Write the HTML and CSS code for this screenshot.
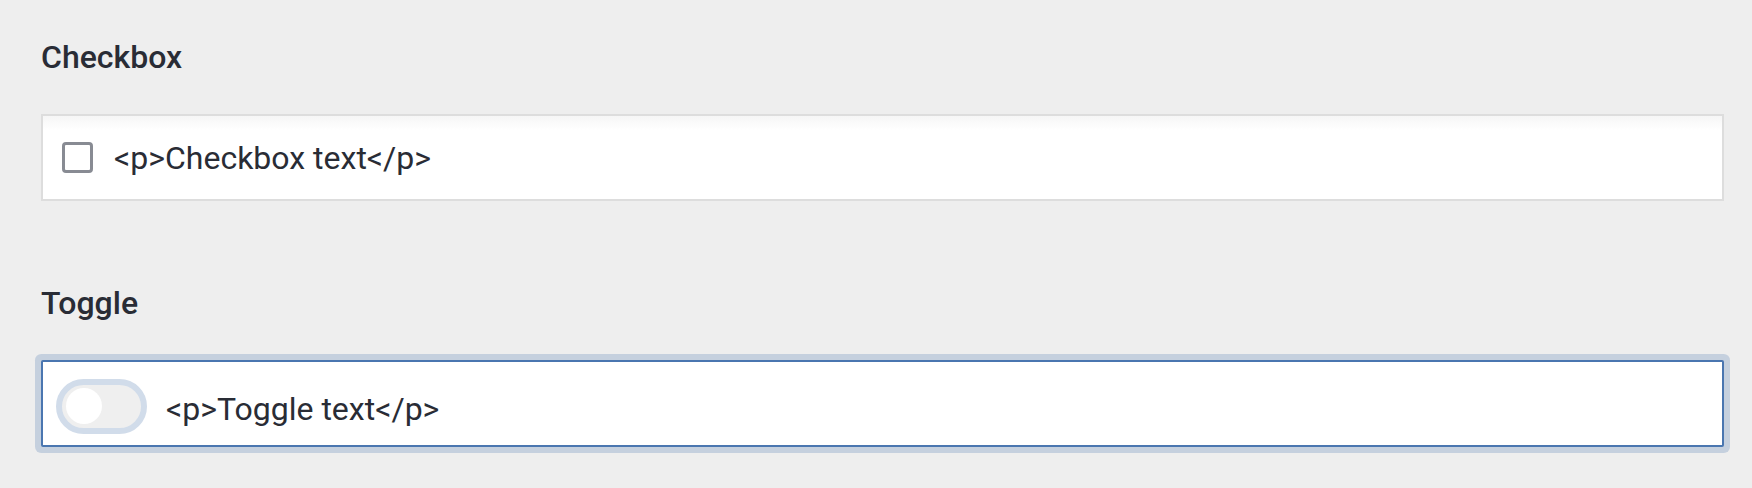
FILE: index.html
```html
<!DOCTYPE html>
<html lang="en">
<head>
<meta charset="utf-8">
<title>Checkbox and Toggle</title>
<link rel="stylesheet" href="styles.css">
</head>
<body>
<main class="page">
  <section class="field">
    <h2 class="field-title">Checkbox</h2>
    <label class="control control--checkbox">
      <span class="checkbox" aria-hidden="true"></span>
      <span class="control-text">&lt;p&gt;Checkbox text&lt;/p&gt;</span>
    </label>
  </section>
  <section class="field">
    <h2 class="field-title">Toggle</h2>
    <label class="control control--toggle is-focused">
      <span class="toggle" aria-hidden="true"><span class="toggle-knob"></span></span>
      <span class="control-text">&lt;p&gt;Toggle text&lt;/p&gt;</span>
    </label>
  </section>
</main>
</body>
</html>
```

FILE: styles.css
```css
html, body {
  margin: 0;
  padding: 0;
  background: #eeeeee;
}

body {
  font-family: Roboto, "Liberation Sans", Arial, sans-serif;
  color: #292c35;
}

.page {
  padding: 38px 28px 0 41px;
}

.field {
  margin: 0 0 83px 0;
}

.field-title {
  margin: 0 0 38px 0;
  font-size: 32px;
  line-height: 38px;
  font-weight: 500;
  color: #292c35;
}

.control {
  display: flex;
  align-items: center;
  box-sizing: border-box;
  height: 87px;
  background: #ffffff;
  border: 2px solid #dddddd;
}

.control--checkbox {
  padding-left: 19px;
  gap: 21px;
  background: linear-gradient(#f6f6f6, #ffffff 14px);
}

.control--toggle {
  padding-left: 13px;
  padding-top: 5px;
  gap: 19px;
}

.control--toggle .control-text {
  margin-top: 6px;
}

.control--toggle.is-focused {
  border-color: #4a76b0;
  border-radius: 2px;
  box-shadow: 0 0 0 6px #c5d0de;
}

.control-text {
  font-size: 32px;
  line-height: 38px;
  color: #292c35;
}

.checkbox {
  box-sizing: border-box;
  width: 31px;
  height: 31px;
  border: 3.5px solid #888b93;
  border-radius: 4px;
  background: #ffffff;
  flex: none;
}

.toggle {
  box-sizing: border-box;
  display: flex;
  align-items: center;
  width: 91px;
  height: 55px;
  padding: 0 4px 0 4px;
  border: 6px solid #d1dcea;
  border-radius: 28px;
  background: #efefef;
  flex: none;
}

.toggle-knob {
  width: 36px;
  height: 36px;
  border-radius: 50%;
  background: #ffffff;
}
```
